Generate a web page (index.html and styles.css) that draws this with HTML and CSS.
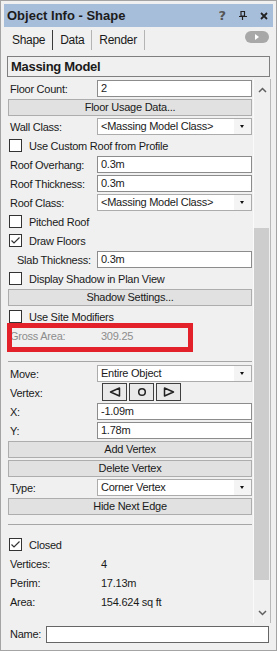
FILE: index.html
```html
<!DOCTYPE html>
<html lang="en">
<head>
    <meta charset="UTF-8">
    <meta name="viewport" content="width=device-width, initial-scale=1.0">
    <title>Object Info - Shape</title>
    <link rel="stylesheet" href="styles.css">
</head>
<body>
<div class="window">
    <div class="titlebar">
        <span class="title">Object Info - Shape</span>
        <span class="title-tools">
            <span class="help">?</span>
            <svg width="8" height="9" viewBox="0 0 8 9"><path d="M2 0.5h3.5v4.5h-3.5z M0 5.5h8 M3.5 5.5v3.5" fill="none" stroke="#222" stroke-width="1.2"/></svg>
            <svg width="8" height="8" viewBox="0 0 8 8"><path d="M1 1L7 7M7 1L1 7" stroke="#222" stroke-width="1.8"/></svg>
        </span>
    </div>
    <div class="tabs">
        <span class="tab active">Shape</span>
        <span class="tab">Data</span>
        <span class="tab">Render</span>
        <span class="tab-more"><svg width="4" height="6" viewBox="0 0 4 6"><path d="M0 0L4 3L0 6z" fill="#fff"/></svg></span>
    </div>
    <div class="section-head">Massing Model</div>

    <div class="panel">
        <div class="rows">
            <div class="row"><span class="lbl">Floor Count:</span><div class="field">2</div></div>
            <div class="row"><div class="btn">Floor Usage Data...</div></div>
            <div class="row"><span class="lbl">Wall Class:</span><div class="select"><span>&lt;Massing Model Class&gt;</span><i class="drop"></i></div></div>
            <div class="row"><div class="check"><span class="box"></span>Use Custom Roof from Profile</div></div>
            <div class="row"><span class="lbl">Roof Overhang:</span><div class="field">0.3m</div></div>
            <div class="row"><span class="lbl">Roof Thickness:</span><div class="field">0.3m</div></div>
            <div class="row"><span class="lbl">Roof Class:</span><div class="select"><span>&lt;Massing Model Class&gt;</span><i class="drop"></i></div></div>
            <div class="row"><div class="check"><span class="box"></span>Pitched Roof</div></div>
            <div class="row"><div class="check"><span class="box"><svg width="11" height="11" viewBox="0 0 11 11"><path d="M1.5 5.5L4 8L9.5 2.5" fill="none" stroke="#333" stroke-width="1.2"/></svg></span>Draw Floors</div></div>
            <div class="row"><span class="lbl indent">Slab Thickness:</span><div class="field">0.3m</div></div>
            <div class="row"><div class="check"><span class="box"></span>Display Shadow in Plan View</div></div>
            <div class="row"><div class="btn">Shadow Settings...</div></div>
            <div class="row"><div class="check"><span class="box"></span>Use Site Modifiers</div></div>
            <div class="row muted"><span class="lbl">Gross Area:</span><span class="val">309.25</span></div>
            <div class="sep"></div>
            <div class="row"><span class="lbl">Move:</span><div class="select"><span>Entire Object</span><i class="drop"></i></div></div>
            <div class="row"><span class="lbl">Vertex:</span>
                <div class="vbtns">
                    <span class="vbtn"><svg width="14" height="10" viewBox="0 0 14 10"><path d="M11.5 1v8L2.5 5z" fill="none" stroke="#222" stroke-width="1.5" stroke-linejoin="round"/></svg></span>
                    <span class="vbtn"><svg width="10" height="10" viewBox="0 0 10 10"><circle cx="5" cy="5" r="3.3" fill="none" stroke="#222" stroke-width="1.5"/></svg></span>
                    <span class="vbtn"><svg width="14" height="10" viewBox="0 0 14 10"><path d="M2.5 1v8L11.5 5z" fill="none" stroke="#222" stroke-width="1.5" stroke-linejoin="round"/></svg></span>
                </div>
            </div>
            <div class="row"><span class="lbl">X:</span><div class="field">-1.09m</div></div>
            <div class="row"><span class="lbl">Y:</span><div class="field">1.78m</div></div>
            <div class="row"><div class="btn">Add Vertex</div></div>
            <div class="row"><div class="btn">Delete Vertex</div></div>
            <div class="row"><span class="lbl">Type:</span><div class="select"><span>Corner Vertex</span><i class="drop"></i></div></div>
            <div class="row"><div class="btn">Hide Next Edge</div></div>
            <div class="sep short"></div>
            <div class="row"><div class="check"><span class="box"><svg width="11" height="11" viewBox="0 0 11 11"><path d="M1.5 5.5L4 8L9.5 2.5" fill="none" stroke="#333" stroke-width="1.2"/></svg></span>Closed</div></div>
            <div class="row"><span class="lbl">Vertices:</span><span class="val">4</span></div>
            <div class="row"><span class="lbl">Perim:</span><span class="val">17.13m</span></div>
            <div class="row"><span class="lbl">Area:</span><span class="val">154.624 sq ft</span></div>
        </div>
        <div class="scrollbar">
            <div class="sb-arrow"><svg width="9" height="6" viewBox="0 0 9 6"><path d="M1 5L4.5 1.5L8 5" fill="none" stroke="#606060" stroke-width="1.5"/></svg></div>
            <div class="sb-track"><div class="sb-thumb"></div></div>
            <div class="sb-arrow"><svg width="9" height="6" viewBox="0 0 9 6"><path d="M1 1L4.5 4.5L8 1" fill="none" stroke="#606060" stroke-width="1.5"/></svg></div>
        </div>
    </div>

    <div class="name-row">
        <span class="lbl">Name:</span>
        <div class="field dark"></div>
    </div>

    <div class="highlight"></div>
</div>
</body>
</html>
```

FILE: styles.css
```css
body {
    margin: 0;
    background-color: #f0f0f0;
    font-family: "Liberation Sans", Arial, sans-serif;
    font-size: 11px;
    color: #1a1a1a;
}

.window {
    position: relative;
    box-sizing: border-box;
    width: 277px;
    height: 651px;
    border: 1px solid #a4a4a4;
    padding: 3px 3px 5px 3px;
    background-color: #f0f0f0;
}

.titlebar {
    display: flex;
    align-items: center;
    height: 23px;
    padding: 0 5px 0 3px;
    background-color: #a7bedb;
}
.title {
    font-size: 13px;
    font-weight: bold;
    color: #1c1c1c;
}
.title-tools {
    margin-left: auto;
    display: flex;
    align-items: center;
    gap: 13px;
}
.help {
    font-family: "DejaVu Sans", sans-serif;
    font-weight: bold;
    font-size: 13px;
    color: #555;
}

.tabs {
    display: flex;
    align-items: center;
    height: 25px;
    padding-left: 1px;
}
.tab {
    height: 20px;
    line-height: 20px;
    padding: 0 7px;
    font-size: 12px;
    letter-spacing: -0.3px;
    border-right: 1px solid #b4b4b4;
}
.tab.active {
    border-right-color: #3a3a3a;
}
.tab-more {
    margin-left: auto;
    margin-right: 4px;
    align-self: flex-start;
    margin-top: 4px;
    width: 24px;
    height: 12px;
    border-radius: 6px;
    background-color: #a8a8a8;
    display: flex;
    align-items: center;
    justify-content: center;
}

.section-head {
    margin: 4px 3px 2px 3px;
    height: 21px;
    box-sizing: border-box;
    border: 1px solid #7f7f7f;
    padding-left: 3px;
    line-height: 19px;
    font-size: 13px;
    font-weight: bold;
    letter-spacing: -0.3px;
}

.panel {
    display: flex;
    height: 544px;
    padding-left: 4px;
    margin-right: 2px;
    border-right: 1px solid #b8b8b8;
}
.rows {
    flex: 1;
    padding-right: 1px;
    letter-spacing: -0.25px;
}
.row {
    display: grid;
    grid-template-columns: 89px 1fr;
    align-items: center;
    height: 19px;
}
.lbl {
    padding-left: 2px;
}
.lbl.indent {
    padding-left: 9px;
}
.val {
    padding-left: 4px;
}
.muted {
    color: #8d8d8d;
}

.field {
    box-sizing: border-box;
    height: 17px;
    line-height: 15px;
    border: 1px solid #8c8c8c;
    background-color: #fff;
    padding-left: 3px;
}
.field.dark {
    border-color: #666;
}

.select {
    box-sizing: border-box;
    display: flex;
    height: 17px;
    line-height: 15px;
    border: 1px solid #acacac;
    background-color: #fff;
}
.select span {
    flex: 1;
    padding-left: 3px;
}
.drop {
    width: 17px;
    background-color: #f4f4f4;
    position: relative;
}
.drop::after {
    content: "";
    position: absolute;
    left: 6px;
    top: 6px;
    border-left: 2.5px solid transparent;
    border-right: 2.5px solid transparent;
    border-top: 3px solid #111;
}

.btn {
    grid-column: 1 / -1;
    box-sizing: border-box;
    height: 17px;
    line-height: 15px;
    text-align: center;
    background-color: #e1e1e1;
    border: 1px solid #adadad;
}

.check {
    grid-column: 1 / -1;
    display: flex;
    align-items: center;
    gap: 7px;
}
.box {
    box-sizing: border-box;
    width: 13px;
    height: 13px;
    margin-left: 1px;
    border: 1px solid #333;
    background-color: #fff;
    display: flex;
    align-items: center;
    justify-content: center;
}

.vbtns {
    display: flex;
    gap: 2px;
    margin-left: 5px;
    align-self: start;
}
.vbtn {
    box-sizing: border-box;
    width: 25px;
    height: 18px;
    border: 1px solid #3f3f3f;
    background-color: #e9e9e9;
    display: flex;
    align-items: center;
    justify-content: center;
}

.sep {
    box-sizing: border-box;
    height: 17px;
    margin-bottom: 2px;
    border-bottom: 1px solid #a6a6a6;
}
.sep.short {
    height: 9px;
    margin-bottom: 10px;
}

.scrollbar {
    width: 16px;
    border-left: 1px solid #fafafa;
    display: flex;
    flex-direction: column;
}
.sb-arrow {
    height: 21px;
    display: flex;
    align-items: center;
    justify-content: center;
}
.sb-track {
    flex: 1;
    padding-top: 128px;
}
.sb-thumb {
    height: 352px;
    margin-right: 1px;
    background-color: #cdcdcd;
}

.name-row {
    display: grid;
    grid-template-columns: 42px 1fr;
    align-items: center;
    height: 22px;
    padding-right: 4px;
    letter-spacing: -0.25px;
}
.name-row .lbl {
    padding-left: 6px;
}

.highlight {
    position: absolute;
    left: 6px;
    top: 322px;
    width: 186px;
    height: 29px;
    box-sizing: border-box;
    border: 5px solid #e2212a;
}
```
